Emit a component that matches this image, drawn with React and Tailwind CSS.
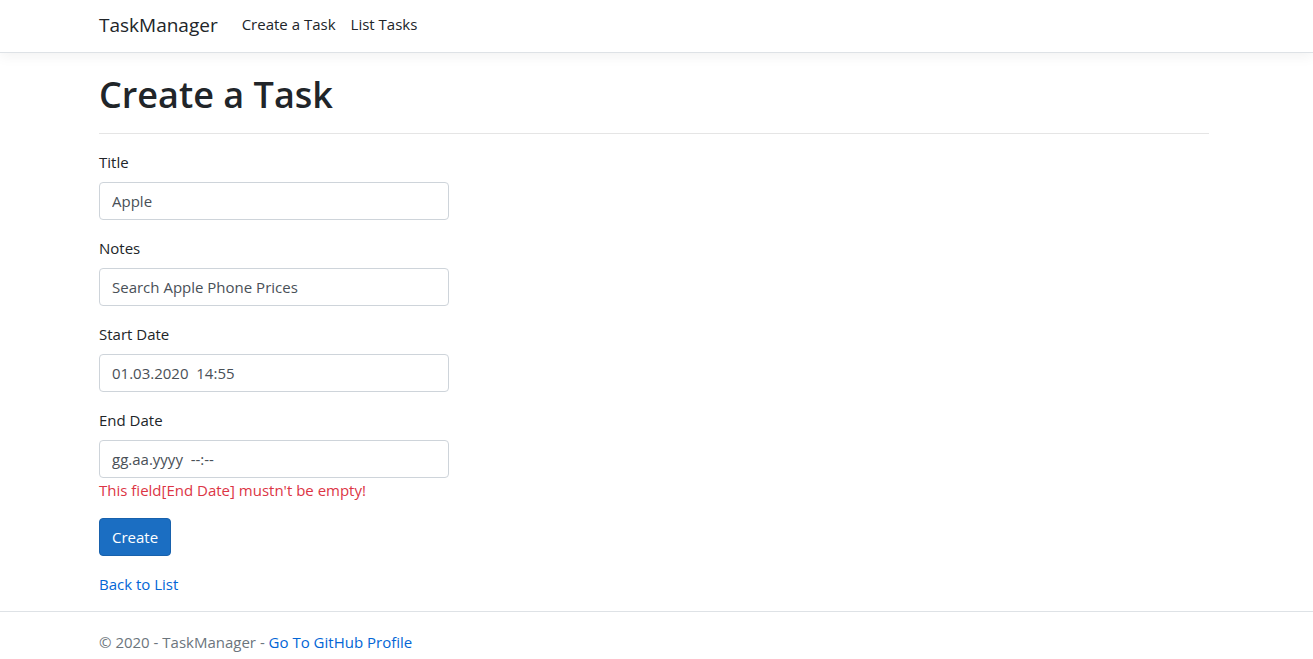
import React from 'react';

const font = { fontFamily: '"Open Sans", "Noto Sans", sans-serif' };

function Field({ label, value, placeholder, error }) {
  return (
    <div className="mb-4">
      <label className="block mb-2 text-[15px] leading-6 text-[#212529]">{label}</label>
      <input
        readOnly
        value={value}
        placeholder={placeholder}
        className="block w-[350px] h-[38px] px-3 text-[15px] text-[#495057] placeholder:text-[#495057] bg-white border border-[#ced4da] rounded outline-none"
      />
      {error && <span className="block text-[15px] leading-6 text-[#dc3545]">{error}</span>}
    </div>
  );
}

export default function App() {
  return (
    <div className="min-h-screen bg-white text-[#212529]" style={font}>
      {/* Navbar */}
      <nav className="h-[53px] bg-white border-b border-[#dee2e6] shadow-[0_4px_12px_rgba(0,0,0,0.05)]">
        <div className="ml-[99px] w-[1110px] h-full flex items-center pb-[3px]">
          <a className="text-[19px] text-[#212529] mr-6 leading-[30px]">TaskManager</a>
          <div className="flex gap-[15px] text-[15px] text-[#212529]">
            <a>Create a Task</a>
            <a>List Tasks</a>
          </div>
        </div>
      </nav>

      {/* Main */}
      <main className="ml-[99px] w-[1110px] pb-[15px]">
        <h1 className="mt-[18px] text-[36px] font-semibold leading-[48px] mb-2">Create a Task</h1>
        <hr className="mt-[14px] mb-4 border-t border-[#e5e5e5]" />
        <form>
          <Field label="Title" value="Apple" />
          <Field label="Notes" value="Search Apple Phone Prices" />
          <Field label="Start Date" value="01.03.2020  14:55" />
          <Field
            label="End Date"
            value=""
            placeholder="gg.aa.yyyy  --:--"
            error="This field[End Date] mustn't be empty!"
          />
          <button
            type="button"
            className="h-[38px] px-3 text-[15px] text-white bg-[#1b6ec2] border border-[#1861ac] rounded"
          >
            Create
          </button>
        </form>
        <div className="mt-4">
          <a className="text-[15px] leading-6 text-[#0366d6]">Back to List</a>
        </div>
      </main>

      {/* Footer */}
      <footer className="border-t border-[#dee2e6] text-[#6c757d]">
        <div className="ml-[99px] w-[1110px] leading-[60px] text-[15px]">
          © 2020 - TaskManager - <a className="text-[#0366d6]">Go To GitHub Profile</a>
        </div>
      </footer>
    </div>
  );
}
